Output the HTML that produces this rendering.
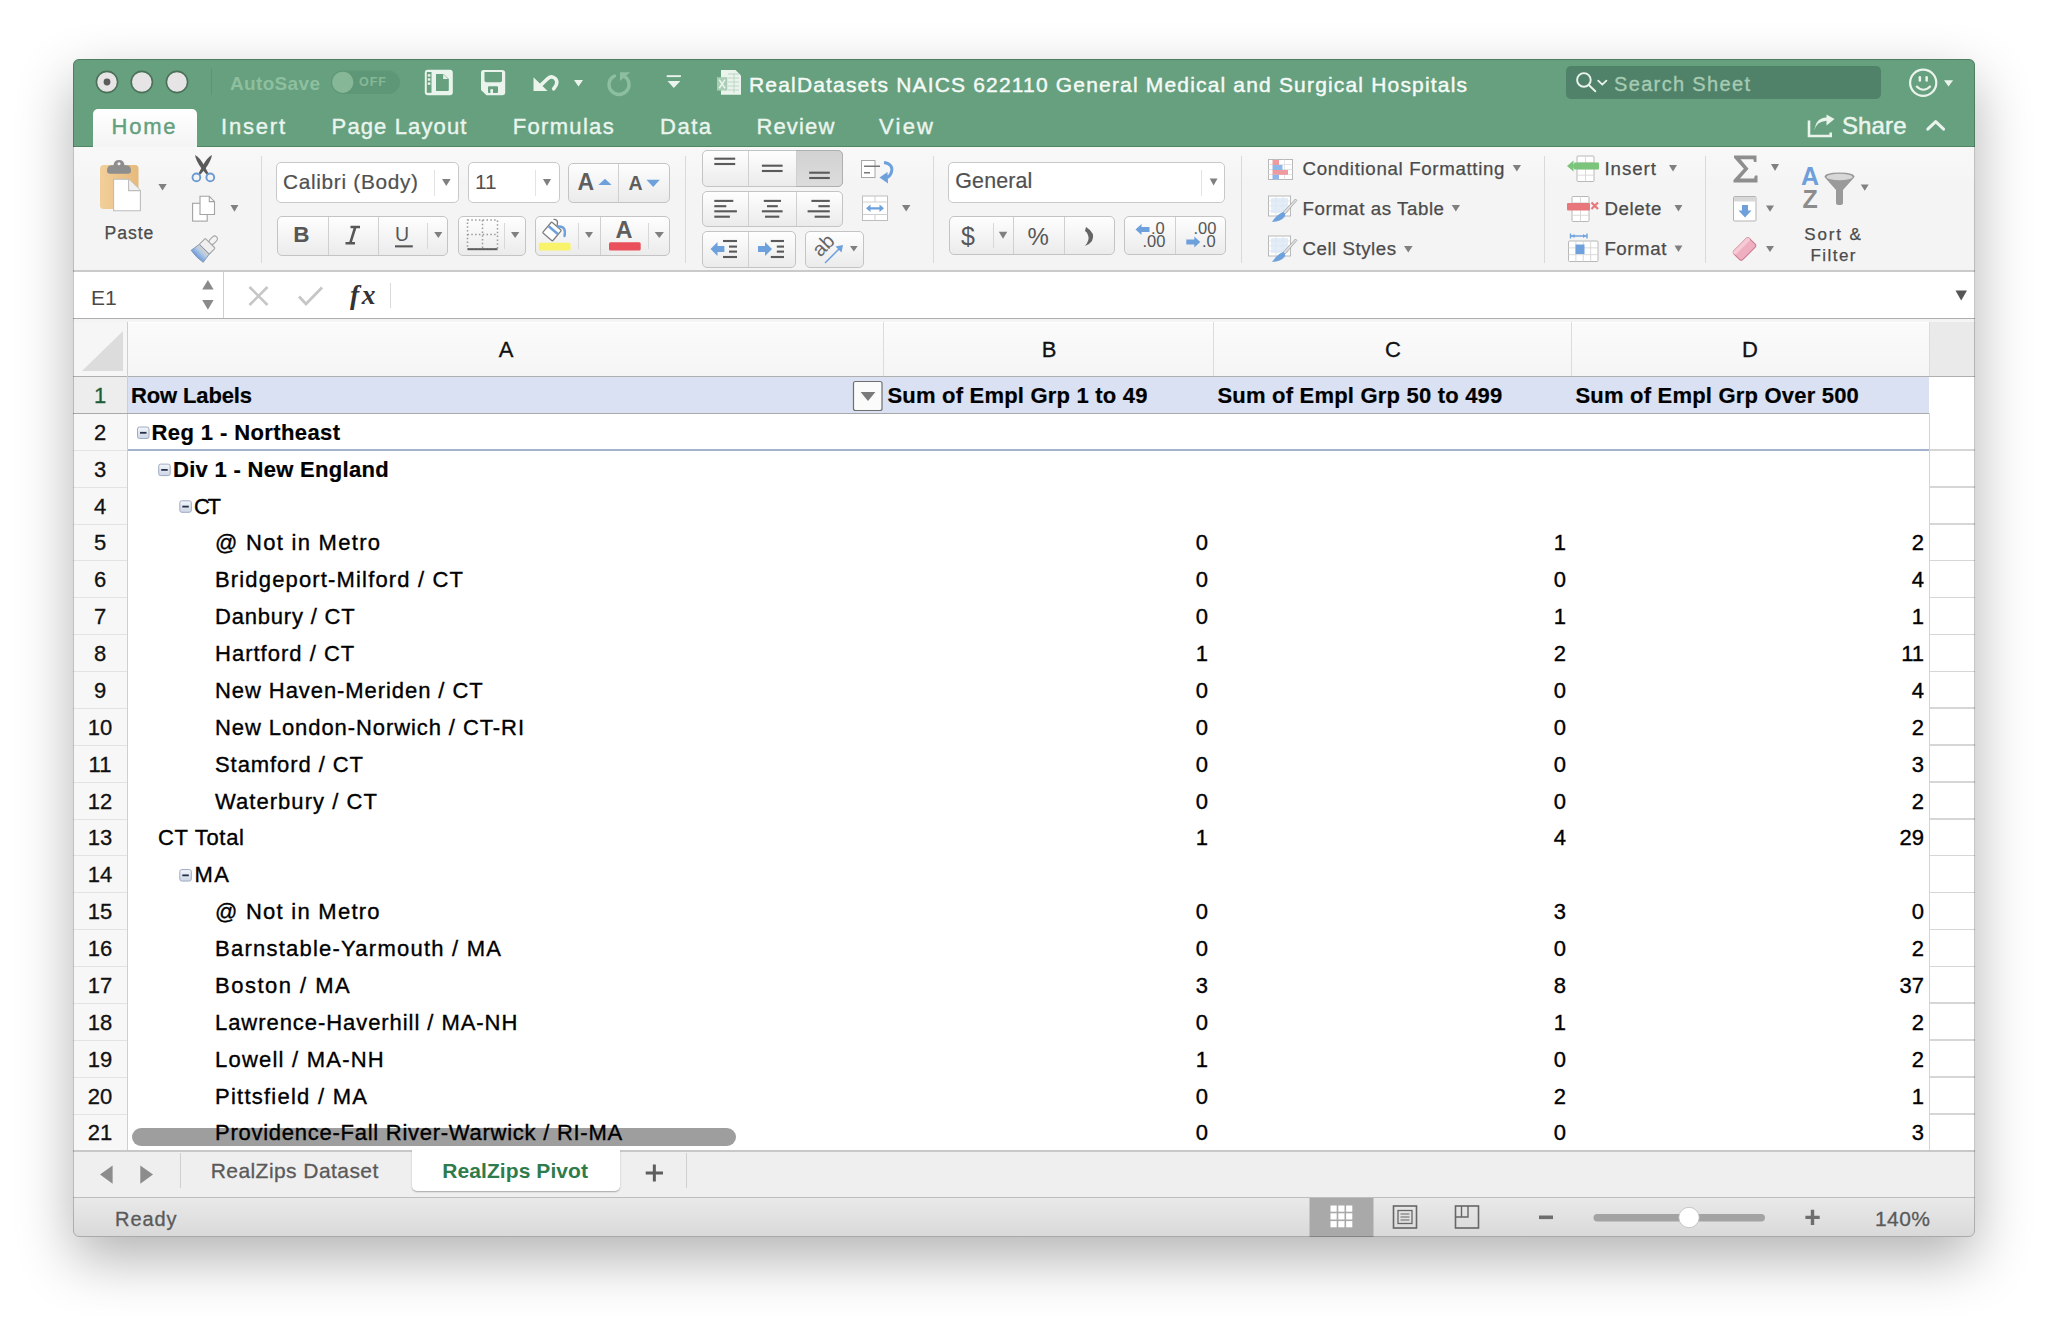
<!DOCTYPE html>
<html><head><meta charset="utf-8"><style>
html,body{margin:0;padding:0;background:#fff;width:2048px;height:1325px;overflow:hidden;font-family:"Liberation Sans", sans-serif;}
#root{position:relative;width:2048px;height:1325px;overflow:hidden;}
#root div, #root span, #root svg{position:absolute;box-sizing:border-box;}
</style></head><body><div id="root">
<div style="left:73px;top:59px;width:1902px;height:1178px;border-radius:6px;background:#fff;box-shadow:0 22px 56px rgba(0,0,0,0.30);"></div>
<div style="left:73px;top:59px;width:1902px;height:88px;background:#66A07E;border-radius:6px 6px 0 0;"></div>
<div style="left:73px;top:146px;width:1902px;height:1px;background:#4F8863;"></div>
<div style="left:73px;top:147px;width:1902px;height:123px;background:linear-gradient(#F8F8F8 0px,#F6F6F6 28px,#F4F4F4 34px,#F4F4F4 100%);"></div>
<div style="left:73px;top:270px;width:1902px;height:2px;background:#CACACA;"></div>
<div style="left:73px;top:272px;width:1902px;height:46px;background:#FFFFFF;"></div>
<div style="left:73px;top:318px;width:1902px;height:1px;background:#AEAEAE;"></div>
<div style="left:73px;top:319px;width:1902px;height:2.5px;background:#F4F4F4;"></div>
<div style="left:73px;top:321.5px;width:1902px;height:1.2px;background:#ACACAC;"></div>
<div style="left:73px;top:322px;width:1902px;height:829px;background:#FFFFFF;"></div>
<div style="left:73px;top:322.7px;width:1902px;height:53.3px;background:linear-gradient(#FBFBFB,#F5F5F5);"></div>
<div style="left:73px;top:375.7px;width:1902px;height:1.3px;background:#AFAFAF;"></div>
<div style="left:73px;top:322px;width:54px;height:54px;background:#F6F6F6;"></div>
<svg style="left:73px;top:322px;" width="54" height="54" viewBox="0 0 54 54"><polygon points="9,49 50,49 50,9" fill="#DCDCDC"/></svg>
<div style="left:127px;top:322px;width:1px;height:829px;background:#CFCFCF;"></div>
<div style="left:883px;top:322px;width:1px;height:54px;background:#DCDCDC;"></div>
<div style="left:1213px;top:322px;width:1px;height:54px;background:#DCDCDC;"></div>
<div style="left:1571px;top:322px;width:1px;height:54px;background:#DCDCDC;"></div>
<div style="left:1929px;top:322px;width:1px;height:54px;background:#DCDCDC;"></div>
<div style="left:1930px;top:322px;width:45px;height:54px;background:#EAEAEA;"></div>
<span style="left:498.66px;top:338.88px;font-size:22px;line-height:22px;color:#111;font-weight:normal;letter-spacing:0.000px;white-space:pre;-webkit-text-stroke:0.3px #111;">A</span>
<span style="left:1041.66px;top:338.88px;font-size:22px;line-height:22px;color:#111;font-weight:normal;letter-spacing:0.000px;white-space:pre;-webkit-text-stroke:0.3px #111;">B</span>
<span style="left:1385.05px;top:338.88px;font-size:22px;line-height:22px;color:#111;font-weight:normal;letter-spacing:0.000px;white-space:pre;-webkit-text-stroke:0.3px #111;">C</span>
<span style="left:1742.05px;top:338.88px;font-size:22px;line-height:22px;color:#111;font-weight:normal;letter-spacing:0.000px;white-space:pre;-webkit-text-stroke:0.3px #111;">D</span>
<div style="left:73px;top:377px;width:54px;height:774px;background:#F7F7F7;"></div>
<div style="left:73px;top:412.875px;width:54px;height:1px;background:#E3E3E3;"></div>
<div style="left:73px;top:449.75px;width:54px;height:1px;background:#E3E3E3;"></div>
<div style="left:73px;top:486.625px;width:54px;height:1px;background:#E3E3E3;"></div>
<div style="left:73px;top:523.5px;width:54px;height:1px;background:#E3E3E3;"></div>
<div style="left:73px;top:560.375px;width:54px;height:1px;background:#E3E3E3;"></div>
<div style="left:73px;top:597.25px;width:54px;height:1px;background:#E3E3E3;"></div>
<div style="left:73px;top:634.125px;width:54px;height:1px;background:#E3E3E3;"></div>
<div style="left:73px;top:671.0px;width:54px;height:1px;background:#E3E3E3;"></div>
<div style="left:73px;top:707.875px;width:54px;height:1px;background:#E3E3E3;"></div>
<div style="left:73px;top:744.75px;width:54px;height:1px;background:#E3E3E3;"></div>
<div style="left:73px;top:781.625px;width:54px;height:1px;background:#E3E3E3;"></div>
<div style="left:73px;top:818.5px;width:54px;height:1px;background:#E3E3E3;"></div>
<div style="left:73px;top:855.375px;width:54px;height:1px;background:#E3E3E3;"></div>
<div style="left:73px;top:892.25px;width:54px;height:1px;background:#E3E3E3;"></div>
<div style="left:73px;top:929.125px;width:54px;height:1px;background:#E3E3E3;"></div>
<div style="left:73px;top:966.0px;width:54px;height:1px;background:#E3E3E3;"></div>
<div style="left:73px;top:1002.875px;width:54px;height:1px;background:#E3E3E3;"></div>
<div style="left:73px;top:1039.75px;width:54px;height:1px;background:#E3E3E3;"></div>
<div style="left:73px;top:1076.625px;width:54px;height:1px;background:#E3E3E3;"></div>
<div style="left:73px;top:1113.5px;width:54px;height:1px;background:#E3E3E3;"></div>
<div style="left:73px;top:377px;width:54px;height:36px;background:#EDEDED;"></div>
<div style="left:128px;top:377px;width:1801px;height:36px;background:#D9E1F2;"></div>
<div style="left:73px;top:412.5px;width:1856px;height:1.5px;background:#A9A9A9;"></div>
<div style="left:128px;top:449px;width:1801px;height:2px;background:#A3B2CD;"></div>
<div style="left:1929px;top:413px;width:1px;height:738px;background:#D4D4D4;"></div>
<div style="left:1930px;top:449.25px;width:45px;height:1.5px;background:#D6D6D6;"></div>
<div style="left:1930px;top:486.125px;width:45px;height:1.5px;background:#D6D6D6;"></div>
<div style="left:1930px;top:523.0px;width:45px;height:1.5px;background:#D6D6D6;"></div>
<div style="left:1930px;top:559.875px;width:45px;height:1.5px;background:#D6D6D6;"></div>
<div style="left:1930px;top:596.75px;width:45px;height:1.5px;background:#D6D6D6;"></div>
<div style="left:1930px;top:633.625px;width:45px;height:1.5px;background:#D6D6D6;"></div>
<div style="left:1930px;top:670.5px;width:45px;height:1.5px;background:#D6D6D6;"></div>
<div style="left:1930px;top:707.375px;width:45px;height:1.5px;background:#D6D6D6;"></div>
<div style="left:1930px;top:744.25px;width:45px;height:1.5px;background:#D6D6D6;"></div>
<div style="left:1930px;top:781.125px;width:45px;height:1.5px;background:#D6D6D6;"></div>
<div style="left:1930px;top:818.0px;width:45px;height:1.5px;background:#D6D6D6;"></div>
<div style="left:1930px;top:854.875px;width:45px;height:1.5px;background:#D6D6D6;"></div>
<div style="left:1930px;top:891.75px;width:45px;height:1.5px;background:#D6D6D6;"></div>
<div style="left:1930px;top:928.625px;width:45px;height:1.5px;background:#D6D6D6;"></div>
<div style="left:1930px;top:965.5px;width:45px;height:1.5px;background:#D6D6D6;"></div>
<div style="left:1930px;top:1002.375px;width:45px;height:1.5px;background:#D6D6D6;"></div>
<div style="left:1930px;top:1039.25px;width:45px;height:1.5px;background:#D6D6D6;"></div>
<div style="left:1930px;top:1076.125px;width:45px;height:1.5px;background:#D6D6D6;"></div>
<div style="left:1930px;top:1113.0px;width:45px;height:1.5px;background:#D6D6D6;"></div>
<div style="left:1930px;top:1149.875px;width:45px;height:1.5px;background:#D6D6D6;"></div>
<span style="left:93.88px;top:384.88px;font-size:22px;line-height:22px;color:#1F5C3C;font-weight:normal;letter-spacing:0.000px;white-space:pre;-webkit-text-stroke:0.3px currentColor;">1</span>
<span style="left:93.88px;top:421.75px;font-size:22px;line-height:22px;color:#111;font-weight:normal;letter-spacing:0.000px;white-space:pre;-webkit-text-stroke:0.3px currentColor;">2</span>
<span style="left:93.88px;top:458.63px;font-size:22px;line-height:22px;color:#111;font-weight:normal;letter-spacing:0.000px;white-space:pre;-webkit-text-stroke:0.3px currentColor;">3</span>
<span style="left:93.88px;top:495.50px;font-size:22px;line-height:22px;color:#111;font-weight:normal;letter-spacing:0.000px;white-space:pre;-webkit-text-stroke:0.3px currentColor;">4</span>
<span style="left:93.88px;top:532.38px;font-size:22px;line-height:22px;color:#111;font-weight:normal;letter-spacing:0.000px;white-space:pre;-webkit-text-stroke:0.3px currentColor;">5</span>
<span style="left:93.88px;top:569.25px;font-size:22px;line-height:22px;color:#111;font-weight:normal;letter-spacing:0.000px;white-space:pre;-webkit-text-stroke:0.3px currentColor;">6</span>
<span style="left:93.88px;top:606.13px;font-size:22px;line-height:22px;color:#111;font-weight:normal;letter-spacing:0.000px;white-space:pre;-webkit-text-stroke:0.3px currentColor;">7</span>
<span style="left:93.88px;top:643.00px;font-size:22px;line-height:22px;color:#111;font-weight:normal;letter-spacing:0.000px;white-space:pre;-webkit-text-stroke:0.3px currentColor;">8</span>
<span style="left:93.88px;top:679.88px;font-size:22px;line-height:22px;color:#111;font-weight:normal;letter-spacing:0.000px;white-space:pre;-webkit-text-stroke:0.3px currentColor;">9</span>
<span style="left:87.76px;top:716.75px;font-size:22px;line-height:22px;color:#111;font-weight:normal;letter-spacing:0.000px;white-space:pre;-webkit-text-stroke:0.3px currentColor;">10</span>
<span style="left:88.58px;top:753.63px;font-size:22px;line-height:22px;color:#111;font-weight:normal;letter-spacing:0.000px;white-space:pre;-webkit-text-stroke:0.3px currentColor;">11</span>
<span style="left:87.76px;top:790.50px;font-size:22px;line-height:22px;color:#111;font-weight:normal;letter-spacing:0.000px;white-space:pre;-webkit-text-stroke:0.3px currentColor;">12</span>
<span style="left:87.76px;top:827.38px;font-size:22px;line-height:22px;color:#111;font-weight:normal;letter-spacing:0.000px;white-space:pre;-webkit-text-stroke:0.3px currentColor;">13</span>
<span style="left:87.76px;top:864.25px;font-size:22px;line-height:22px;color:#111;font-weight:normal;letter-spacing:0.000px;white-space:pre;-webkit-text-stroke:0.3px currentColor;">14</span>
<span style="left:87.76px;top:901.13px;font-size:22px;line-height:22px;color:#111;font-weight:normal;letter-spacing:0.000px;white-space:pre;-webkit-text-stroke:0.3px currentColor;">15</span>
<span style="left:87.76px;top:938.00px;font-size:22px;line-height:22px;color:#111;font-weight:normal;letter-spacing:0.000px;white-space:pre;-webkit-text-stroke:0.3px currentColor;">16</span>
<span style="left:87.76px;top:974.88px;font-size:22px;line-height:22px;color:#111;font-weight:normal;letter-spacing:0.000px;white-space:pre;-webkit-text-stroke:0.3px currentColor;">17</span>
<span style="left:87.76px;top:1011.75px;font-size:22px;line-height:22px;color:#111;font-weight:normal;letter-spacing:0.000px;white-space:pre;-webkit-text-stroke:0.3px currentColor;">18</span>
<span style="left:87.76px;top:1048.63px;font-size:22px;line-height:22px;color:#111;font-weight:normal;letter-spacing:0.000px;white-space:pre;-webkit-text-stroke:0.3px currentColor;">19</span>
<span style="left:87.76px;top:1085.50px;font-size:22px;line-height:22px;color:#111;font-weight:normal;letter-spacing:0.000px;white-space:pre;-webkit-text-stroke:0.3px currentColor;">20</span>
<span style="left:87.76px;top:1122.38px;font-size:22px;line-height:22px;color:#111;font-weight:normal;letter-spacing:0.000px;white-space:pre;-webkit-text-stroke:0.3px currentColor;">21</span>
<span style="left:131.00px;top:384.88px;font-size:22px;line-height:22px;color:#000;font-weight:bold;letter-spacing:-0.139px;white-space:pre;-webkit-text-stroke:0.2px #000;">Row Labels</span>
<span style="left:151.50px;top:421.75px;font-size:22px;line-height:22px;color:#000;font-weight:bold;letter-spacing:0.396px;white-space:pre;-webkit-text-stroke:0.2px #000;">Reg 1 - Northeast</span>
<span style="left:173.00px;top:458.63px;font-size:22px;line-height:22px;color:#000;font-weight:bold;letter-spacing:0.302px;white-space:pre;-webkit-text-stroke:0.2px #000;">Div 1 - New England</span>
<span style="left:194.00px;top:495.50px;font-size:22px;line-height:22px;color:#000;font-weight:normal;letter-spacing:-2.328px;white-space:pre;-webkit-text-stroke:0.35px #000;">CT</span>
<span style="left:215.00px;top:532.38px;font-size:22px;line-height:22px;color:#000;font-weight:normal;letter-spacing:1.287px;white-space:pre;-webkit-text-stroke:0.35px #000;">@ Not in Metro</span>
<span style="left:1195.75px;top:532.38px;font-size:22px;line-height:22px;color:#000;font-weight:normal;letter-spacing:0.000px;white-space:pre;-webkit-text-stroke:0.35px #000;">0</span>
<span style="left:1553.75px;top:532.38px;font-size:22px;line-height:22px;color:#000;font-weight:normal;letter-spacing:0.000px;white-space:pre;-webkit-text-stroke:0.35px #000;">1</span>
<span style="left:1911.75px;top:532.38px;font-size:22px;line-height:22px;color:#000;font-weight:normal;letter-spacing:0.000px;white-space:pre;-webkit-text-stroke:0.35px #000;">2</span>
<span style="left:215.00px;top:569.25px;font-size:22px;line-height:22px;color:#000;font-weight:normal;letter-spacing:1.158px;white-space:pre;-webkit-text-stroke:0.35px #000;">Bridgeport-Milford / CT</span>
<span style="left:1195.75px;top:569.25px;font-size:22px;line-height:22px;color:#000;font-weight:normal;letter-spacing:0.000px;white-space:pre;-webkit-text-stroke:0.35px #000;">0</span>
<span style="left:1553.75px;top:569.25px;font-size:22px;line-height:22px;color:#000;font-weight:normal;letter-spacing:0.000px;white-space:pre;-webkit-text-stroke:0.35px #000;">0</span>
<span style="left:1911.75px;top:569.25px;font-size:22px;line-height:22px;color:#000;font-weight:normal;letter-spacing:0.000px;white-space:pre;-webkit-text-stroke:0.35px #000;">4</span>
<span style="left:215.00px;top:606.13px;font-size:22px;line-height:22px;color:#000;font-weight:normal;letter-spacing:0.807px;white-space:pre;-webkit-text-stroke:0.35px #000;">Danbury / CT</span>
<span style="left:1195.75px;top:606.13px;font-size:22px;line-height:22px;color:#000;font-weight:normal;letter-spacing:0.000px;white-space:pre;-webkit-text-stroke:0.35px #000;">0</span>
<span style="left:1553.75px;top:606.13px;font-size:22px;line-height:22px;color:#000;font-weight:normal;letter-spacing:0.000px;white-space:pre;-webkit-text-stroke:0.35px #000;">1</span>
<span style="left:1911.75px;top:606.13px;font-size:22px;line-height:22px;color:#000;font-weight:normal;letter-spacing:0.000px;white-space:pre;-webkit-text-stroke:0.35px #000;">1</span>
<span style="left:215.00px;top:643.00px;font-size:22px;line-height:22px;color:#000;font-weight:normal;letter-spacing:1.013px;white-space:pre;-webkit-text-stroke:0.35px #000;">Hartford / CT</span>
<span style="left:1195.75px;top:643.00px;font-size:22px;line-height:22px;color:#000;font-weight:normal;letter-spacing:0.000px;white-space:pre;-webkit-text-stroke:0.35px #000;">1</span>
<span style="left:1553.75px;top:643.00px;font-size:22px;line-height:22px;color:#000;font-weight:normal;letter-spacing:0.000px;white-space:pre;-webkit-text-stroke:0.35px #000;">2</span>
<span style="left:1901.16px;top:643.00px;font-size:22px;line-height:22px;color:#000;font-weight:normal;letter-spacing:0.000px;white-space:pre;-webkit-text-stroke:0.35px #000;">11</span>
<span style="left:215.00px;top:679.88px;font-size:22px;line-height:22px;color:#000;font-weight:normal;letter-spacing:0.929px;white-space:pre;-webkit-text-stroke:0.35px #000;">New Haven-Meriden / CT</span>
<span style="left:1195.75px;top:679.88px;font-size:22px;line-height:22px;color:#000;font-weight:normal;letter-spacing:0.000px;white-space:pre;-webkit-text-stroke:0.35px #000;">0</span>
<span style="left:1553.75px;top:679.88px;font-size:22px;line-height:22px;color:#000;font-weight:normal;letter-spacing:0.000px;white-space:pre;-webkit-text-stroke:0.35px #000;">0</span>
<span style="left:1911.75px;top:679.88px;font-size:22px;line-height:22px;color:#000;font-weight:normal;letter-spacing:0.000px;white-space:pre;-webkit-text-stroke:0.35px #000;">4</span>
<span style="left:215.00px;top:716.75px;font-size:22px;line-height:22px;color:#000;font-weight:normal;letter-spacing:0.916px;white-space:pre;-webkit-text-stroke:0.35px #000;">New London-Norwich / CT-RI</span>
<span style="left:1195.75px;top:716.75px;font-size:22px;line-height:22px;color:#000;font-weight:normal;letter-spacing:0.000px;white-space:pre;-webkit-text-stroke:0.35px #000;">0</span>
<span style="left:1553.75px;top:716.75px;font-size:22px;line-height:22px;color:#000;font-weight:normal;letter-spacing:0.000px;white-space:pre;-webkit-text-stroke:0.35px #000;">0</span>
<span style="left:1911.75px;top:716.75px;font-size:22px;line-height:22px;color:#000;font-weight:normal;letter-spacing:0.000px;white-space:pre;-webkit-text-stroke:0.35px #000;">2</span>
<span style="left:215.00px;top:753.63px;font-size:22px;line-height:22px;color:#000;font-weight:normal;letter-spacing:0.923px;white-space:pre;-webkit-text-stroke:0.35px #000;">Stamford / CT</span>
<span style="left:1195.75px;top:753.63px;font-size:22px;line-height:22px;color:#000;font-weight:normal;letter-spacing:0.000px;white-space:pre;-webkit-text-stroke:0.35px #000;">0</span>
<span style="left:1553.75px;top:753.63px;font-size:22px;line-height:22px;color:#000;font-weight:normal;letter-spacing:0.000px;white-space:pre;-webkit-text-stroke:0.35px #000;">0</span>
<span style="left:1911.75px;top:753.63px;font-size:22px;line-height:22px;color:#000;font-weight:normal;letter-spacing:0.000px;white-space:pre;-webkit-text-stroke:0.35px #000;">3</span>
<span style="left:215.00px;top:790.50px;font-size:22px;line-height:22px;color:#000;font-weight:normal;letter-spacing:1.044px;white-space:pre;-webkit-text-stroke:0.35px #000;">Waterbury / CT</span>
<span style="left:1195.75px;top:790.50px;font-size:22px;line-height:22px;color:#000;font-weight:normal;letter-spacing:0.000px;white-space:pre;-webkit-text-stroke:0.35px #000;">0</span>
<span style="left:1553.75px;top:790.50px;font-size:22px;line-height:22px;color:#000;font-weight:normal;letter-spacing:0.000px;white-space:pre;-webkit-text-stroke:0.35px #000;">0</span>
<span style="left:1911.75px;top:790.50px;font-size:22px;line-height:22px;color:#000;font-weight:normal;letter-spacing:0.000px;white-space:pre;-webkit-text-stroke:0.35px #000;">2</span>
<span style="left:158.00px;top:827.38px;font-size:22px;line-height:22px;color:#000;font-weight:normal;letter-spacing:0.696px;white-space:pre;-webkit-text-stroke:0.35px #000;">CT Total</span>
<span style="left:1195.75px;top:827.38px;font-size:22px;line-height:22px;color:#000;font-weight:normal;letter-spacing:0.000px;white-space:pre;-webkit-text-stroke:0.35px #000;">1</span>
<span style="left:1553.75px;top:827.38px;font-size:22px;line-height:22px;color:#000;font-weight:normal;letter-spacing:0.000px;white-space:pre;-webkit-text-stroke:0.35px #000;">4</span>
<span style="left:1899.52px;top:827.38px;font-size:22px;line-height:22px;color:#000;font-weight:normal;letter-spacing:0.000px;white-space:pre;-webkit-text-stroke:0.35px #000;">29</span>
<span style="left:194.50px;top:864.25px;font-size:22px;line-height:22px;color:#000;font-weight:normal;letter-spacing:1.500px;white-space:pre;-webkit-text-stroke:0.35px #000;">MA</span>
<span style="left:215.00px;top:901.13px;font-size:22px;line-height:22px;color:#000;font-weight:normal;letter-spacing:1.256px;white-space:pre;-webkit-text-stroke:0.35px #000;">@ Not in Metro</span>
<span style="left:1195.75px;top:901.13px;font-size:22px;line-height:22px;color:#000;font-weight:normal;letter-spacing:0.000px;white-space:pre;-webkit-text-stroke:0.35px #000;">0</span>
<span style="left:1553.75px;top:901.13px;font-size:22px;line-height:22px;color:#000;font-weight:normal;letter-spacing:0.000px;white-space:pre;-webkit-text-stroke:0.35px #000;">3</span>
<span style="left:1911.75px;top:901.13px;font-size:22px;line-height:22px;color:#000;font-weight:normal;letter-spacing:0.000px;white-space:pre;-webkit-text-stroke:0.35px #000;">0</span>
<span style="left:215.00px;top:938.00px;font-size:22px;line-height:22px;color:#000;font-weight:normal;letter-spacing:1.235px;white-space:pre;-webkit-text-stroke:0.35px #000;">Barnstable-Yarmouth / MA</span>
<span style="left:1195.75px;top:938.00px;font-size:22px;line-height:22px;color:#000;font-weight:normal;letter-spacing:0.000px;white-space:pre;-webkit-text-stroke:0.35px #000;">0</span>
<span style="left:1553.75px;top:938.00px;font-size:22px;line-height:22px;color:#000;font-weight:normal;letter-spacing:0.000px;white-space:pre;-webkit-text-stroke:0.35px #000;">0</span>
<span style="left:1911.75px;top:938.00px;font-size:22px;line-height:22px;color:#000;font-weight:normal;letter-spacing:0.000px;white-space:pre;-webkit-text-stroke:0.35px #000;">2</span>
<span style="left:215.00px;top:974.88px;font-size:22px;line-height:22px;color:#000;font-weight:normal;letter-spacing:1.496px;white-space:pre;-webkit-text-stroke:0.35px #000;">Boston / MA</span>
<span style="left:1195.75px;top:974.88px;font-size:22px;line-height:22px;color:#000;font-weight:normal;letter-spacing:0.000px;white-space:pre;-webkit-text-stroke:0.35px #000;">3</span>
<span style="left:1553.75px;top:974.88px;font-size:22px;line-height:22px;color:#000;font-weight:normal;letter-spacing:0.000px;white-space:pre;-webkit-text-stroke:0.35px #000;">8</span>
<span style="left:1899.52px;top:974.88px;font-size:22px;line-height:22px;color:#000;font-weight:normal;letter-spacing:0.000px;white-space:pre;-webkit-text-stroke:0.35px #000;">37</span>
<span style="left:215.00px;top:1011.75px;font-size:22px;line-height:22px;color:#000;font-weight:normal;letter-spacing:0.942px;white-space:pre;-webkit-text-stroke:0.35px #000;">Lawrence-Haverhill / MA-NH</span>
<span style="left:1195.75px;top:1011.75px;font-size:22px;line-height:22px;color:#000;font-weight:normal;letter-spacing:0.000px;white-space:pre;-webkit-text-stroke:0.35px #000;">0</span>
<span style="left:1553.75px;top:1011.75px;font-size:22px;line-height:22px;color:#000;font-weight:normal;letter-spacing:0.000px;white-space:pre;-webkit-text-stroke:0.35px #000;">1</span>
<span style="left:1911.75px;top:1011.75px;font-size:22px;line-height:22px;color:#000;font-weight:normal;letter-spacing:0.000px;white-space:pre;-webkit-text-stroke:0.35px #000;">2</span>
<span style="left:215.00px;top:1048.63px;font-size:22px;line-height:22px;color:#000;font-weight:normal;letter-spacing:1.222px;white-space:pre;-webkit-text-stroke:0.35px #000;">Lowell / MA-NH</span>
<span style="left:1195.75px;top:1048.63px;font-size:22px;line-height:22px;color:#000;font-weight:normal;letter-spacing:0.000px;white-space:pre;-webkit-text-stroke:0.35px #000;">1</span>
<span style="left:1553.75px;top:1048.63px;font-size:22px;line-height:22px;color:#000;font-weight:normal;letter-spacing:0.000px;white-space:pre;-webkit-text-stroke:0.35px #000;">0</span>
<span style="left:1911.75px;top:1048.63px;font-size:22px;line-height:22px;color:#000;font-weight:normal;letter-spacing:0.000px;white-space:pre;-webkit-text-stroke:0.35px #000;">2</span>
<span style="left:215.00px;top:1085.50px;font-size:22px;line-height:22px;color:#000;font-weight:normal;letter-spacing:1.244px;white-space:pre;-webkit-text-stroke:0.35px #000;">Pittsfield / MA</span>
<span style="left:1195.75px;top:1085.50px;font-size:22px;line-height:22px;color:#000;font-weight:normal;letter-spacing:0.000px;white-space:pre;-webkit-text-stroke:0.35px #000;">0</span>
<span style="left:1553.75px;top:1085.50px;font-size:22px;line-height:22px;color:#000;font-weight:normal;letter-spacing:0.000px;white-space:pre;-webkit-text-stroke:0.35px #000;">2</span>
<span style="left:1911.75px;top:1085.50px;font-size:22px;line-height:22px;color:#000;font-weight:normal;letter-spacing:0.000px;white-space:pre;-webkit-text-stroke:0.35px #000;">1</span>
<span style="left:215.00px;top:1122.38px;font-size:22px;line-height:22px;color:#000;font-weight:normal;letter-spacing:0.739px;white-space:pre;-webkit-text-stroke:0.35px #000;">Providence-Fall River-Warwick / RI-MA</span>
<span style="left:1195.75px;top:1122.38px;font-size:22px;line-height:22px;color:#000;font-weight:normal;letter-spacing:0.000px;white-space:pre;-webkit-text-stroke:0.35px #000;">0</span>
<span style="left:1553.75px;top:1122.38px;font-size:22px;line-height:22px;color:#000;font-weight:normal;letter-spacing:0.000px;white-space:pre;-webkit-text-stroke:0.35px #000;">0</span>
<span style="left:1911.75px;top:1122.38px;font-size:22px;line-height:22px;color:#000;font-weight:normal;letter-spacing:0.000px;white-space:pre;-webkit-text-stroke:0.35px #000;">3</span>
<span style="left:887.50px;top:384.88px;font-size:22px;line-height:22px;color:#000;font-weight:bold;letter-spacing:0.200px;white-space:pre;-webkit-text-stroke:0.2px #000;">Sum of Empl Grp 1 to 49</span>
<span style="left:1217.50px;top:384.88px;font-size:22px;line-height:22px;color:#000;font-weight:bold;letter-spacing:0.200px;white-space:pre;-webkit-text-stroke:0.2px #000;">Sum of Empl Grp 50 to 499</span>
<span style="left:1575.50px;top:384.88px;font-size:22px;line-height:22px;color:#000;font-weight:bold;letter-spacing:0.200px;white-space:pre;-webkit-text-stroke:0.2px #000;">Sum of Empl Grp Over 500</span>
<div style="left:73px;top:1151px;width:1902px;height:47px;background:#EFEFEF;"></div>
<div style="left:73px;top:1150px;width:1902px;height:2px;background:#C8C8C8;"></div>
<div style="left:73px;top:1197px;width:1902px;height:1px;background:#BDBDBD;"></div>
<div style="left:73px;top:1198px;width:1902px;height:39px;background:linear-gradient(#E9E9E9,#D9D9D9);border-radius:0 0 6px 6px;"></div>
<span style="left:210.70px;top:1159.72px;font-size:21px;line-height:21px;color:#5A5A5A;font-weight:normal;letter-spacing:0.435px;white-space:pre;-webkit-text-stroke:0.3px #5A5A5A;">RealZips Dataset</span>
<div style="left:412px;top:1150px;width:208px;height:41px;background:#fff;border-radius:0 0 5px 5px;box-shadow:0 1px 1.5px rgba(0,0,0,0.3);"></div>
<span style="left:442.30px;top:1159.72px;font-size:21px;line-height:21px;color:#2E7B4C;font-weight:bold;letter-spacing:0.077px;white-space:pre;">RealZips Pivot</span>
<span style="left:115.00px;top:1208.67px;font-size:20px;line-height:20px;color:#5A5A5A;font-weight:normal;letter-spacing:0.947px;white-space:pre;-webkit-text-stroke:0.3px #5A5A5A;">Ready</span>
<span style="left:1875.00px;top:1208.12px;font-size:21px;line-height:21px;color:#5A5A5A;font-weight:normal;letter-spacing:0.427px;white-space:pre;-webkit-text-stroke:0.3px #5A5A5A;">140%</span>
<span style="left:749.00px;top:73.52px;font-size:21px;line-height:21px;color:#F4FAF6;font-weight:normal;letter-spacing:1.175px;white-space:pre;-webkit-text-stroke:0.45px #F4FAF6;">RealDatasets NAICS 622110 General Medical and Surgical Hospitals</span>
<span style="left:230.00px;top:73.52px;font-size:19px;line-height:19px;color:#8EBF9F;font-weight:bold;letter-spacing:0.337px;white-space:pre;">AutoSave</span>
<div style="left:92.5px;top:109px;width:104.5px;height:38px;background:linear-gradient(#FFFFFF,#F4F4F4);border-radius:5px 5px 0 0;"></div>
<span style="left:111.50px;top:116.08px;font-size:22px;line-height:22px;color:#64A07E;font-weight:normal;letter-spacing:1.771px;white-space:pre;-webkit-text-stroke:0.4px #64A07E;">Home</span>
<span style="left:221.00px;top:116.08px;font-size:22px;line-height:22px;color:#EAF5EE;font-weight:normal;letter-spacing:1.794px;white-space:pre;-webkit-text-stroke:0.4px #EAF5EE;">Insert</span>
<span style="left:331.60px;top:116.08px;font-size:22px;line-height:22px;color:#EAF5EE;font-weight:normal;letter-spacing:1.125px;white-space:pre;-webkit-text-stroke:0.4px #EAF5EE;">Page Layout</span>
<span style="left:512.70px;top:116.08px;font-size:22px;line-height:22px;color:#EAF5EE;font-weight:normal;letter-spacing:1.330px;white-space:pre;-webkit-text-stroke:0.4px #EAF5EE;">Formulas</span>
<span style="left:660.00px;top:116.08px;font-size:22px;line-height:22px;color:#EAF5EE;font-weight:normal;letter-spacing:1.505px;white-space:pre;-webkit-text-stroke:0.4px #EAF5EE;">Data</span>
<span style="left:756.40px;top:116.08px;font-size:22px;line-height:22px;color:#EAF5EE;font-weight:normal;letter-spacing:1.172px;white-space:pre;-webkit-text-stroke:0.4px #EAF5EE;">Review</span>
<span style="left:879.00px;top:116.08px;font-size:22px;line-height:22px;color:#EAF5EE;font-weight:normal;letter-spacing:2.234px;white-space:pre;-webkit-text-stroke:0.4px #EAF5EE;">View</span>
<span style="left:1842.00px;top:114.38px;font-size:24px;line-height:24px;color:#EAF5EE;font-weight:normal;letter-spacing:0.113px;white-space:pre;-webkit-text-stroke:0.5px #EAF5EE;">Share</span>
<div style="left:1566px;top:66px;width:315px;height:33px;background:#50826A;border-radius:5px;"></div>
<span style="left:1614.00px;top:73.87px;font-size:20px;line-height:20px;color:#A6CBB3;font-weight:normal;letter-spacing:1.345px;white-space:pre;-webkit-text-stroke:0.35px #A6CBB3;">Search Sheet</span>
<span style="left:104.40px;top:225.30px;font-size:17.6px;line-height:17.6px;color:#4B4B4B;font-weight:normal;letter-spacing:1.000px;white-space:pre;-webkit-text-stroke:0.25px #4B4B4B;">Paste</span>
<span style="left:1302.50px;top:159.67px;font-size:18.7px;line-height:18.7px;color:#4B4B4B;font-weight:normal;letter-spacing:0.666px;white-space:pre;-webkit-text-stroke:0.25px #4B4B4B;">Conditional Formatting</span>
<span style="left:1302.50px;top:199.77px;font-size:18.7px;line-height:18.7px;color:#4B4B4B;font-weight:normal;letter-spacing:0.561px;white-space:pre;-webkit-text-stroke:0.25px #4B4B4B;">Format as Table</span>
<span style="left:1302.50px;top:240.17px;font-size:18.7px;line-height:18.7px;color:#4B4B4B;font-weight:normal;letter-spacing:0.522px;white-space:pre;-webkit-text-stroke:0.25px #4B4B4B;">Cell Styles</span>
<span style="left:1604.40px;top:159.97px;font-size:18.7px;line-height:18.7px;color:#4B4B4B;font-weight:normal;letter-spacing:0.970px;white-space:pre;-webkit-text-stroke:0.25px #4B4B4B;">Insert</span>
<span style="left:1604.40px;top:199.87px;font-size:18.7px;line-height:18.7px;color:#4B4B4B;font-weight:normal;letter-spacing:0.594px;white-space:pre;-webkit-text-stroke:0.25px #4B4B4B;">Delete</span>
<span style="left:1604.40px;top:240.17px;font-size:18.7px;line-height:18.7px;color:#4B4B4B;font-weight:normal;letter-spacing:0.562px;white-space:pre;-webkit-text-stroke:0.25px #4B4B4B;">Format</span>
<span style="left:1804.30px;top:225.61px;font-size:17px;line-height:17px;color:#4B4B4B;font-weight:normal;letter-spacing:1.850px;white-space:pre;-webkit-text-stroke:0.25px #4B4B4B;">Sort &amp;</span>
<span style="left:1810.50px;top:246.61px;font-size:17px;line-height:17px;color:#4B4B4B;font-weight:normal;letter-spacing:1.444px;white-space:pre;-webkit-text-stroke:0.25px #4B4B4B;">Filter</span>
<div style="left:276px;top:162px;width:183px;height:41px;background:#fff;border:1px solid #C9C9C9;border-radius:5px;"></div>
<div style="left:467.5px;top:162px;width:92px;height:41px;background:#fff;border:1px solid #C9C9C9;border-radius:5px;"></div>
<div style="left:434px;top:170px;width:1px;height:26px;background:#E3E3E3;"></div>
<div style="left:534.5px;top:170px;width:1px;height:26px;background:#E3E3E3;"></div>
<span style="left:283.00px;top:171.79px;font-size:20.8px;line-height:20.8px;color:#505050;font-weight:normal;letter-spacing:0.694px;white-space:pre;-webkit-text-stroke:0.2px #505050;">Calibri (Body)</span>
<span style="left:475.00px;top:171.79px;font-size:20.8px;line-height:20.8px;color:#505050;font-weight:normal;letter-spacing:0.000px;white-space:pre;">11</span>
<div style="left:948px;top:162px;width:277px;height:41px;background:#fff;border:1px solid #C9C9C9;border-radius:5px;"></div>
<div style="left:1201px;top:170px;width:1px;height:26px;background:#E3E3E3;"></div>
<span style="left:955.30px;top:171.38px;font-size:21.4px;line-height:21.4px;color:#505050;font-weight:normal;letter-spacing:0.148px;white-space:pre;-webkit-text-stroke:0.2px #505050;">General</span>
<span style="left:91.00px;top:287.22px;font-size:21px;line-height:21px;color:#4A4A4A;font-weight:normal;letter-spacing:0.000px;white-space:pre;">E1</span>
<div style="left:223px;top:272px;width:1px;height:46px;background:#D0D0D0;"></div>
<svg style="left:80px;top:59px;" width="120" height="46" viewBox="0 0 120 46"><circle cx="27" cy="23" r="10.6" fill="#E6E4E4" stroke="#4B7058" stroke-width="1.6"/><circle cx="61.80000000000001" cy="23" r="10.6" fill="#E6E4E4" stroke="#4B7058" stroke-width="1.6"/><circle cx="97" cy="23" r="10.6" fill="#E6E4E4" stroke="#4B7058" stroke-width="1.6"/><circle cx="27" cy="23" r="3.4" fill="#5C5C5C"/></svg>
<div style="left:210.5px;top:68px;width:1px;height:27px;background:#5C9474;"></div>
<svg style="left:330px;top:70px;" width="72" height="25" viewBox="0 0 72 25"><rect x="1" y="0.5" width="69" height="23.5" rx="11.75" fill="#5E9777"/><circle cx="12.8" cy="12.3" r="10.6" fill="#86B897"/></svg>
<span style="left:359.00px;top:76.22px;font-size:12.5px;line-height:12.5px;color:#86B897;font-weight:bold;letter-spacing:1.000px;white-space:pre;">OFF</span>
<svg style="left:424px;top:69px;" width="30" height="28" viewBox="0 0 30 28"><rect x="0.8" y="0.8" width="28" height="25.5" rx="3" fill="#EAF4EC"/>
<rect x="2.8" y="3" width="4.7" height="20.8" fill="#66A07E"/>
<rect x="3.8" y="5.2" width="2.6" height="2.4" fill="#EAF4EC"/><rect x="3.8" y="9.3" width="2.6" height="2.4" fill="#EAF4EC"/><rect x="3.8" y="13.4" width="2.6" height="2.4" fill="#EAF4EC"/>
<path d="M15.4 5 H23 L28.2 10 V21 Q28.2 22 27.2 22 H15.4 Z" fill="#66A07E" transform="translate(-3.4,0)"/>
<path d="M22.6 5 L22.6 10 L27.4 10" fill="#EAF4EC" transform="translate(-3.4,0)"/></svg>
<svg style="left:480px;top:69px;" width="28" height="28" viewBox="0 0 28 28"><path d="M3 0.9 H22 Q25.2 0.9 25.2 4 V23.3 Q25.2 26.3 22.2 26.3 H6.5 L1 21 V3.5 Q1 0.9 3 0.9 Z" fill="#EAF4EC"/>
<path d="M4.5 3 H22 V11.5 Q22 13.3 20.2 13.3 H6.3 Q4.5 13.3 4.5 11.5 Z" fill="#66A07E"/>
<rect x="8" y="17.2" width="10" height="6.8" rx="1" fill="#66A07E"/>
<rect x="10.4" y="20.2" width="2.6" height="3.8" fill="#EAF4EC"/></svg>
<svg style="left:530px;top:70px;" width="60" height="26" viewBox="0 0 60 26"><path d="M3.5 7.2 L3.5 21 L17.6 21 Z" fill="#EAF4EC"/>
<path d="M11 15 L17.5 8.8 Q21.7 5 25.5 8.8 Q29 12.8 23.7 18.8" fill="none" stroke="#EAF4EC" stroke-width="3.6" stroke-linecap="round"/>
<path d="M44 10 H53 L48.5 16.6 Z" fill="#EAF4EC"/></svg>
<svg style="left:606px;top:70px;" width="28" height="28" viewBox="0 0 28 28"><path d="M8.5 6 Q3 8.8 3 14.5 A10 10 0 0 0 23 14.5 Q23 8.5 17.5 6" fill="none" stroke="#8DBF9F" stroke-width="3.4" stroke-linecap="round"/>
<path d="M14 2.2 H24.2 L14 11 Z" fill="#8DBF9F"/></svg>
<svg style="left:664px;top:72px;" width="20" height="20" viewBox="0 0 20 20"><rect x="2.7" y="3.2" width="14.2" height="1.9" fill="#EAF4EC"/><path d="M3.5 9 H16.4 L9.8 16 Z" fill="#EAF4EC"/></svg>
<svg style="left:715px;top:68px;" width="30" height="30" viewBox="0 0 30 30"><path d="M6 2.1 H20.5 L26 7.5 V26.8 H6 Z" fill="#EAF4EC"/>
<g stroke="#B9D4C2" stroke-width="0.9">
<line x1="13" y1="6" x2="24" y2="6"/><line x1="13" y1="10" x2="24" y2="10"/><line x1="13" y1="14" x2="24" y2="14"/><line x1="13" y1="18" x2="24" y2="18"/><line x1="13" y1="22" x2="24" y2="22"/>
<line x1="19" y1="5" x2="19" y2="25"/></g>
<rect x="2" y="9.2" width="10.3" height="13.4" fill="#A9CDB5"/>
<path d="M4.2 11.6 L10 20.2 M10 11.6 L4.2 20.2" stroke="#EAF4EC" stroke-width="1.6"/></svg>
<svg style="left:1570px;top:70px;" width="42" height="26" viewBox="0 0 42 26"><circle cx="13.9" cy="9.9" r="6.8" fill="none" stroke="#EAF4EC" stroke-width="1.9"/>
<line x1="18.8" y1="15" x2="25.3" y2="21.3" stroke="#EAF4EC" stroke-width="1.9" stroke-linecap="round"/>
<path d="M28.2 10.6 L32.3 14.6 L36.4 10.6" fill="none" stroke="#EAF4EC" stroke-width="1.8" stroke-linecap="round"/></svg>
<svg style="left:1905px;top:66px;" width="52" height="34" viewBox="0 0 52 34"><circle cx="18.2" cy="16.7" r="13.1" fill="none" stroke="#EAF4EC" stroke-width="2.2"/>
<rect x="13.6" y="10" width="2.5" height="5.8" rx="1.2" fill="#EAF4EC"/><rect x="20.4" y="10" width="2.5" height="5.8" rx="1.2" fill="#EAF4EC"/>
<path d="M11.2 20 Q18.3 27.5 25.7 20" fill="none" stroke="#EAF4EC" stroke-width="2"/>
<path d="M39 14.2 H48.1 L43.5 20.4 Z" fill="#EAF4EC"/></svg>
<svg style="left:1805px;top:112px;" width="34" height="28" viewBox="0 0 34 28"><path d="M4 8.5 V24 H25.7 V20.5" fill="none" stroke="#EAF4EC" stroke-width="2.6"/>
<path d="M9.5 18.8 Q11 9.5 21.5 8.8 V13.5 L29.5 7 L21.5 2.5 V5.6 Q10.5 6 9.5 18.8 Z" fill="#EAF4EC"/></svg>
<svg style="left:1922px;top:116px;" width="26" height="18" viewBox="0 0 26 18"><path d="M5.8 13.1 L13.7 5.7 L21.6 13.1" fill="none" stroke="#EAF4EC" stroke-width="3" stroke-linecap="round" stroke-linejoin="round"/></svg>
<div style="left:260.5px;top:156px;width:1px;height:107px;background:#DADADA;"></div>
<div style="left:685px;top:156px;width:1px;height:107px;background:#DADADA;"></div>
<div style="left:932.5px;top:156px;width:1px;height:107px;background:#DADADA;"></div>
<div style="left:1241px;top:156px;width:1px;height:107px;background:#DADADA;"></div>
<div style="left:1543.5px;top:156px;width:1px;height:107px;background:#DADADA;"></div>
<div style="left:1705px;top:156px;width:1px;height:107px;background:#DADADA;"></div>
<div style="left:277px;top:215.5px;width:171px;height:40px;background:linear-gradient(#FEFEFE,#EBEBEB);border:1px solid #C4C4C4;border-radius:5px;"></div>
<div style="left:327.5px;top:216.5px;width:1px;height:38px;background:#D0D0D0;"></div>
<div style="left:377.5px;top:216.5px;width:1px;height:38px;background:#D0D0D0;"></div>
<div style="left:427px;top:222.5px;width:1px;height:26px;background:#D8D8D8;"></div>
<div style="left:457.5px;top:215.5px;width:68px;height:40px;background:linear-gradient(#FEFEFE,#EBEBEB);border:1px solid #C4C4C4;border-radius:5px;"></div>
<div style="left:504px;top:222.5px;width:1px;height:26px;background:#D8D8D8;"></div>
<div style="left:534.5px;top:215.5px;width:135px;height:40px;background:linear-gradient(#FEFEFE,#EBEBEB);border:1px solid #C4C4C4;border-radius:5px;"></div>
<div style="left:599.5px;top:216.5px;width:1px;height:38px;background:#D0D0D0;"></div>
<div style="left:578px;top:222.5px;width:1px;height:26px;background:#D8D8D8;"></div>
<div style="left:648px;top:222.5px;width:1px;height:26px;background:#D8D8D8;"></div>
<div style="left:568px;top:162.5px;width:101.5px;height:40px;background:linear-gradient(#FEFEFE,#EBEBEB);border:1px solid #C4C4C4;border-radius:5px;"></div>
<div style="left:618px;top:163.5px;width:1px;height:38px;background:#D0D0D0;"></div>
<div style="left:701.5px;top:150px;width:141.5px;height:37px;background:linear-gradient(#FEFEFE,#EBEBEB);border:1px solid #C4C4C4;border-radius:5px;"></div>
<div style="left:795.5px;top:150px;width:47.5px;height:37px;background:linear-gradient(#D2D2D2,#DCDCDC);border:1px solid #AFAFAF;border-radius:0 5px 5px 0;"></div>
<div style="left:748px;top:151px;width:1px;height:35px;background:#D0D0D0;"></div>
<div style="left:795.5px;top:151px;width:1px;height:35px;background:#D0D0D0;"></div>
<div style="left:701.5px;top:190.5px;width:141.5px;height:36.5px;background:linear-gradient(#FEFEFE,#EBEBEB);border:1px solid #C4C4C4;border-radius:5px;"></div>
<div style="left:748px;top:191.5px;width:1px;height:34.5px;background:#D0D0D0;"></div>
<div style="left:795.5px;top:191.5px;width:1px;height:34.5px;background:#D0D0D0;"></div>
<div style="left:701.5px;top:230.5px;width:94px;height:37px;background:linear-gradient(#FEFEFE,#EBEBEB);border:1px solid #C4C4C4;border-radius:5px;"></div>
<div style="left:748px;top:231.5px;width:1px;height:35px;background:#D0D0D0;"></div>
<div style="left:805px;top:230.5px;width:59px;height:37px;background:linear-gradient(#FEFEFE,#EBEBEB);border:1px solid #C4C4C4;border-radius:5px;"></div>
<div style="left:948.5px;top:215.5px;width:166.5px;height:39.5px;background:linear-gradient(#FEFEFE,#EBEBEB);border:1px solid #C4C4C4;border-radius:5px;"></div>
<div style="left:1013.3px;top:216.5px;width:1px;height:37.5px;background:#D0D0D0;"></div>
<div style="left:1064.4px;top:216.5px;width:1px;height:37.5px;background:#D0D0D0;"></div>
<div style="left:992.5px;top:222.5px;width:1px;height:25.5px;background:#D8D8D8;"></div>
<div style="left:1124px;top:215.5px;width:101.5px;height:39.5px;background:linear-gradient(#FEFEFE,#EBEBEB);border:1px solid #C4C4C4;border-radius:5px;"></div>
<div style="left:1175px;top:216.5px;width:1px;height:37.5px;background:#D0D0D0;"></div>
<span style="left:577.50px;top:171.03px;font-size:23px;line-height:23px;color:#5E5E5E;font-weight:bold;letter-spacing:0.000px;white-space:pre;">A</span>
<span style="left:628.50px;top:173.99px;font-size:19.5px;line-height:19.5px;color:#5E5E5E;font-weight:bold;letter-spacing:0.000px;white-space:pre;">A</span>
<span style="left:293.20px;top:224.25px;font-size:22.5px;line-height:22.5px;color:#575757;font-weight:bold;letter-spacing:0.000px;white-space:pre;">B</span>
<span style="left:395.00px;top:224.79px;font-size:19.5px;line-height:19.5px;color:#575757;font-weight:normal;letter-spacing:0.000px;white-space:pre;">U</span>
<span style="left:615.50px;top:218.61px;font-size:23.5px;line-height:23.5px;color:#5E5E5E;font-weight:bold;letter-spacing:0.000px;white-space:pre;">A</span>
<span style="left:961.00px;top:224.34px;font-size:25px;line-height:25px;color:#575757;font-weight:normal;letter-spacing:0.000px;white-space:pre;">$</span>
<span style="left:1027.50px;top:224.68px;font-size:24px;line-height:24px;color:#575757;font-weight:normal;letter-spacing:0.000px;white-space:pre;">%</span>
<span style="left:1151.00px;top:219.53px;font-size:16.5px;line-height:16.5px;color:#555;font-weight:normal;letter-spacing:0.000px;white-space:pre;">.0</span>
<span style="left:1142.50px;top:233.03px;font-size:16.5px;line-height:16.5px;color:#555;font-weight:normal;letter-spacing:0.000px;white-space:pre;">.00</span>
<span style="left:1193.50px;top:219.53px;font-size:16.5px;line-height:16.5px;color:#555;font-weight:normal;letter-spacing:0.000px;white-space:pre;">.00</span>
<span style="left:1202.00px;top:233.03px;font-size:16.5px;line-height:16.5px;color:#555;font-weight:normal;letter-spacing:0.000px;white-space:pre;">.0</span>
<span style="left:1801.00px;top:164.24px;font-size:25px;line-height:25px;color:#6E9FDA;font-weight:bold;letter-spacing:0.000px;white-space:pre;">A</span>
<span style="left:1802.50px;top:187.14px;font-size:25px;line-height:25px;color:#8C8C8C;font-weight:bold;letter-spacing:0.000px;white-space:pre;">Z</span>
<svg style="left:0;top:0" width="2048" height="300" viewBox="0 0 2048 300"><defs><linearGradient id="org" x1="0" y1="0" x2="1" y2="0"><stop offset="0" stop-color="#F2CF9A"/><stop offset="1" stop-color="#E6BA7C"/></linearGradient></defs>
<rect x="100" y="165" width="38.5" height="44" rx="3.5" fill="url(#org)"/>
<path d="M107 170.5 Q107 165.3 112 165.3 L113.5 165.3 Q114 160 119 160 Q124 160 124.5 165.3 L126 165.3 Q131 165.3 131 170.5 Q131 173.8 128 173.8 H110 Q107 173.8 107 170.5 Z" fill="#8E8E8E"/><circle cx="119" cy="163.8" r="1.5" fill="#F4F4F4"/>
<path d="M113.6 179.2 H128.6 L140.4 190.6 V210.8 H113.6 Z" fill="#FFFFFF" stroke="#BDBDBD" stroke-width="1.1"/>
<path d="M128.6 179.2 V190.6 H140.4" fill="#F1F1F1" stroke="#BDBDBD" stroke-width="1.1"/><path d="M158.4 184 H166.7 L162.55 190.6 Z" fill="#808080"/><path d="M195 155 Q199.5 157 204.5 166 L208.5 173.5 L206.5 174.5 L201.5 168.5 Q196 161 195 155 Z" fill="#5A5A5A"/>
<path d="M212 155 Q207.5 157 202.5 166 L198.5 173.5 L200.5 174.5 L205.5 168.5 Q211 161 212 155 Z" fill="#5A5A5A"/>
<circle cx="196.4" cy="177.4" r="3.9" fill="#F4F4F4" stroke="#6B9AD2" stroke-width="1.9"/>
<circle cx="210.3" cy="177.4" r="3.9" fill="#F4F4F4" stroke="#6B9AD2" stroke-width="1.9"/><rect x="192.6" y="203.3" width="14.6" height="17.8" fill="#fff" stroke="#A3A3A3" stroke-width="1.1"/>
<path d="M200 196.3 H209.3 L214.5 201.6 V214.5 H200 Z" fill="#fff" stroke="#A3A3A3" stroke-width="1.1"/>
<path d="M209.3 196.3 V201.6 H214.5" fill="none" stroke="#A3A3A3" stroke-width="1.1"/><path d="M230.5 205 H238.4 L234.45 211.7 Z" fill="#808080"/><defs><linearGradient id="brs" x1="0" y1="0" x2="0" y2="1"><stop offset="0" stop-color="#D8CDBD"/><stop offset="0.35" stop-color="#B9CDE6"/><stop offset="1" stop-color="#6A9BDA"/></linearGradient></defs>
<g transform="translate(206 247.5) rotate(45)">
<rect x="-2.8" y="-15" width="5.6" height="9.5" rx="2.8" fill="#F3F3F3" stroke="#A6A6A6" stroke-width="1.1"/>
<rect x="-7" y="-6" width="14" height="8.5" rx="1" fill="#EFEFEF" stroke="#A6A6A6" stroke-width="1.1"/>
<path d="M-7 2.5 H7 L8.5 12.5 Q0 14 -8.5 12.5 Z" fill="url(#brs)" stroke="#7A8FAE" stroke-width="0.8"/>
</g><path d="M442 179 H450.6 L446.3 186 Z" fill="#808080"/><path d="M543 179 H551 L547.0 186 Z" fill="#808080"/><path d="M598.3 184.9 H611.6 L605 178.7 Z" fill="#6EA0DC"/><path d="M646.5 179.7 H659.8 L653.2 187 Z" fill="#6EA0DC"/><path d="M350.5 227 H360 M345.5 243.3 H355 M355.3 227 L350.2 243.3" stroke="#575757" stroke-width="2.6" fill="none"/><rect x="395" y="245.3" width="17.8" height="2.1" fill="#575757"/><path d="M434.2 232 H442.4 L438.29999999999995 238 Z" fill="#808080"/><g fill="none" stroke="#9A9A9A" stroke-width="1.5" stroke-dasharray="1.5 2.3">
<rect x="467.5" y="220" width="30" height="29"/><line x1="482.5" y1="220" x2="482.5" y2="249"/><line x1="467.5" y1="234.5" x2="497.5" y2="234.5"/></g>
<rect x="467.5" y="248.2" width="30" height="2" fill="#5E5E5E"/><path d="M511 232 H519.3 L515.15 238 Z" fill="#808080"/><path d="M553.5 219.5 A3 3 0 0 1 557.5 222.5 L557 227" fill="none" stroke="#7A7A7A" stroke-width="1.3"/>
<g transform="translate(552 231.5) rotate(40)"><rect x="-6.5" y="-7" width="13" height="14" rx="1" fill="#fff" stroke="#7E7E7E" stroke-width="1.3"/><rect x="-6" y="-3.2" width="12" height="2.6" fill="#6EA0DC"/></g>
<path d="M558.5 226.5 Q566.5 226 564.5 236" fill="none" stroke="#6EA0DC" stroke-width="2.4" stroke-linecap="round"/>
<rect x="538.8" y="242.7" width="31.8" height="7.8" rx="1.5" fill="#F8F36A"/><path d="M585 232 H593 L589.0 238 Z" fill="#808080"/><rect x="609" y="242.3" width="31.7" height="8.2" rx="1.5" fill="#E9505C"/><path d="M654.7 232 H663.9 L659.3 238 Z" fill="#808080"/><rect x="714.3" y="157.64999999999998" width="20.90000000000009" height="2.1" fill="#5A5A5A"/><rect x="714.3" y="162.95" width="20.90000000000009" height="2.1" fill="#5A5A5A"/><rect x="761.9" y="164.64999999999998" width="20.700000000000045" height="2.1" fill="#5A5A5A"/><rect x="761.9" y="169.95" width="20.700000000000045" height="2.1" fill="#5A5A5A"/><rect x="809.2" y="171.64999999999998" width="20.59999999999991" height="2.1" fill="#5A5A5A"/><rect x="809.2" y="176.95" width="20.59999999999991" height="2.1" fill="#5A5A5A"/><rect x="714.3" y="199.85" width="19.0" height="2.1" fill="#5A5A5A"/><rect x="714.3" y="205.14999999999998" width="12.0" height="2.1" fill="#5A5A5A"/><rect x="714.3" y="210.25" width="22.600000000000023" height="2.1" fill="#5A5A5A"/><rect x="714.3" y="215.64999999999998" width="15.600000000000023" height="2.1" fill="#5A5A5A"/><rect x="763.8" y="199.85" width="17.200000000000045" height="2.1" fill="#5A5A5A"/><rect x="767" y="205.14999999999998" width="10.799999999999955" height="2.1" fill="#5A5A5A"/><rect x="761.9" y="210.25" width="20.700000000000045" height="2.1" fill="#5A5A5A"/><rect x="765" y="215.64999999999998" width="14.299999999999955" height="2.1" fill="#5A5A5A"/><rect x="811.4" y="199.85" width="18.399999999999977" height="2.1" fill="#5A5A5A"/><rect x="818.4" y="205.14999999999998" width="11.399999999999977" height="2.1" fill="#5A5A5A"/><rect x="807.6" y="210.25" width="22.199999999999932" height="2.1" fill="#5A5A5A"/><rect x="814.6" y="215.64999999999998" width="15.199999999999932" height="2.1" fill="#5A5A5A"/><rect x="723" y="239.95" width="14" height="2.1" fill="#5A5A5A"/><rect x="729" y="245.54999999999998" width="8" height="2.1" fill="#5A5A5A"/><rect x="729" y="250.54999999999998" width="8" height="2.1" fill="#5A5A5A"/><rect x="723" y="255.95" width="14" height="2.1" fill="#5A5A5A"/><path d="M710.5 249 L717.5 242 V246 H724.4 V252 H717.5 V256 Z" fill="#6EA0DC"/><rect x="770.8" y="239.95" width="13.200000000000045" height="2.1" fill="#5A5A5A"/><rect x="776.8" y="245.54999999999998" width="7.2000000000000455" height="2.1" fill="#5A5A5A"/><rect x="776.8" y="250.54999999999998" width="7.2000000000000455" height="2.1" fill="#5A5A5A"/><rect x="770.8" y="255.95" width="13.200000000000045" height="2.1" fill="#5A5A5A"/><path d="M772 249 L765 242 V246 H758 V252 H765 V256 Z" fill="#6EA0DC"/><line x1="825" y1="263" x2="841.5" y2="246.5" stroke="#6EA0DC" stroke-width="1.5"/><path d="M843 245 L835.5 246.5 L841.5 252.5 Z" fill="#6EA0DC"/><path d="M850 246 H857.7 L853.85 251.6 Z" fill="#808080"/><rect x="861.5" y="160.5" width="13.5" height="17" fill="#fff" stroke="#A6A6A6" stroke-width="1"/>
<rect x="864" y="165.5" width="16" height="1.5" fill="#777"/><rect x="864" y="172" width="6" height="1.5" fill="#777"/>
<path d="M884 162.5 Q893.5 164 891.5 172 Q890 177 886 177.5" fill="none" stroke="#6EA0DC" stroke-width="3"/><path d="M879.5 177.5 L887.5 172 L888 183.5 Z" fill="#6EA0DC"/><rect x="862.5" y="196" width="25" height="24.5" fill="#fff" stroke="#BDBDBD" stroke-width="1"/>
<line x1="875" y1="196" x2="875" y2="202" stroke="#CFCFCF"/><line x1="875" y1="215" x2="875" y2="220.5" stroke="#CFCFCF"/>
<line x1="862.5" y1="202" x2="887.5" y2="202" stroke="#CFCFCF"/><line x1="862.5" y1="214.5" x2="887.5" y2="214.5" stroke="#CFCFCF"/>
<path d="M866 208.3 L870.5 204.5 V207.2 H879.5 V204.5 L884 208.3 L879.5 212 V209.4 H870.5 V212 Z" fill="#6EA0DC"/><path d="M902 205 H910.4 L906.2 211.6 Z" fill="#808080"/><path d="M1209.7 178.6 H1217.5 L1213.6 185.6 Z" fill="#808080"/><path d="M998.8 231.7 H1007.3 L1003.05 238.8 Z" fill="#808080"/><path d="M1086 227 Q1096 233 1092 241 Q1089 245 1085 246 Q1090 240 1088 235 Q1087 232 1085 231 Z" fill="#656565"/><path d="M1135.5 229.4 L1141.5 224 V227 H1149.5 V232 H1141.5 V235 Z" fill="#6EA0DC"/><path d="M1200.3 242 L1194.3 236.6 V239.6 H1186.3 V244.6 H1194.3 V247.6 Z" fill="#6EA0DC"/><rect x="1268.5" y="159.5" width="24" height="20" fill="#fff" stroke="#B8B8B8" stroke-width="1"/>
<g stroke="#DDDDDD" stroke-width="0.8"><line x1="1268.5" y1="164.5" x2="1292.5" y2="164.5"/><line x1="1268.5" y1="169.5" x2="1292.5" y2="169.5"/><line x1="1268.5" y1="174.5" x2="1292.5" y2="174.5"/><line x1="1276.5" y1="159.5" x2="1276.5" y2="179.5"/><line x1="1284.5" y1="159.5" x2="1284.5" y2="179.5"/></g>
<rect x="1272.5" y="160" width="6.5" height="5" fill="#EE9A9E"/><rect x="1272.5" y="165" width="10" height="5" fill="#8FB8EA"/><rect x="1272.5" y="170" width="15.5" height="4.8" fill="#EE9A9E"/><rect x="1272.5" y="174.8" width="6.5" height="4.5" fill="#8FB8EA"/><rect x="1268.5" y="196" width="22" height="20" fill="#fff" stroke="#B8B8B8" stroke-width="1"/>
<g stroke="#DCDCDC" stroke-width="0.8"><line x1="1268.5" y1="201" x2="1290.5" y2="201"/><line x1="1268.5" y1="206" x2="1290.5" y2="206"/><line x1="1268.5" y1="211" x2="1290.5" y2="211"/><line x1="1276" y1="196" x2="1276" y2="216"/><line x1="1283" y1="196" x2="1283" y2="216"/></g>
<rect x="1271" y="198" width="17" height="15" fill="#DCE8F6" opacity="0.8"/>
<path d="M1295.5 199 L1296.8 200.5 L1285 214 L1283 212.5 Z" fill="#E4E4E4" stroke="#9C9C9C" stroke-width="0.8"/>
<path d="M1283 212 Q1286.5 214 1284.5 217 Q1281 221.5 1272 222 Q1276 215 1283 212 Z" fill="#6FA2DD"/><rect x="1268.5" y="236" width="22" height="20" fill="#fff" stroke="#B8B8B8" stroke-width="1"/>
<g stroke="#DCDCDC" stroke-width="0.8"><line x1="1268.5" y1="241" x2="1290.5" y2="241"/><line x1="1268.5" y1="246" x2="1290.5" y2="246"/><line x1="1268.5" y1="251" x2="1290.5" y2="251"/><line x1="1276" y1="236" x2="1276" y2="256"/><line x1="1283" y1="236" x2="1283" y2="256"/></g>
<rect x="1271" y="238" width="17" height="15" fill="#DCE8F6" opacity="0.8"/>
<path d="M1295.5 239 L1296.8 240.5 L1285 254 L1283 252.5 Z" fill="#E4E4E4" stroke="#9C9C9C" stroke-width="0.8"/>
<path d="M1283 252 Q1286.5 254 1284.5 257 Q1281 261.5 1272 262 Q1276 255 1283 252 Z" fill="#6FA2DD"/><path d="M1512.7 165 H1521 L1516.85 171.5 Z" fill="#808080"/><path d="M1451.7 205 H1460 L1455.85 211.5 Z" fill="#808080"/><path d="M1404 246 H1412.6 L1408.3 252.5 Z" fill="#808080"/><rect x="1577" y="156" width="17" height="25.5" fill="#fff" stroke="#B8B8B8" stroke-width="1" rx="1"/><line x1="1577" y1="162.375" x2="1594" y2="162.375" stroke="#D6D6D6" stroke-width="0.9"/><line x1="1577" y1="168.75" x2="1594" y2="168.75" stroke="#D6D6D6" stroke-width="0.9"/><line x1="1577" y1="175.125" x2="1594" y2="175.125" stroke="#D6D6D6" stroke-width="0.9"/><line x1="1585.5" y1="156" x2="1585.5" y2="181.5" stroke="#D6D6D6" stroke-width="0.9"/><rect x="1574" y="162.5" width="25" height="7" rx="1" fill="#7BC47B"/><path d="M1567 166 L1573.5 160.5 V171.5 Z" fill="#7BC47B"/><rect x="1571" y="164.5" width="5" height="3" fill="#7BC47B"/><rect x="1572" y="196.5" width="17" height="25" fill="#fff" stroke="#B8B8B8" stroke-width="1" rx="1"/><line x1="1572" y1="202.75" x2="1589" y2="202.75" stroke="#D6D6D6" stroke-width="0.9"/><line x1="1572" y1="209.0" x2="1589" y2="209.0" stroke="#D6D6D6" stroke-width="0.9"/><line x1="1572" y1="215.25" x2="1589" y2="215.25" stroke="#D6D6D6" stroke-width="0.9"/><line x1="1580.5" y1="196.5" x2="1580.5" y2="221.5" stroke="#D6D6D6" stroke-width="0.9"/><rect x="1567" y="203" width="23" height="7.5" rx="1" fill="#E8777C"/><path d="M1591.5 202.5 L1598 209 M1598 202.5 L1591.5 209" stroke="#E8777C" stroke-width="2.2"/><rect x="1568.5" y="241" width="29.5" height="20.5" fill="#fff" stroke="#B8B8B8" stroke-width="1" rx="1"/><line x1="1568.5" y1="247.83333333333334" x2="1598.0" y2="247.83333333333334" stroke="#D6D6D6" stroke-width="0.9"/><line x1="1568.5" y1="254.66666666666666" x2="1598.0" y2="254.66666666666666" stroke="#D6D6D6" stroke-width="0.9"/><line x1="1575.875" y1="241" x2="1575.875" y2="261.5" stroke="#D6D6D6" stroke-width="0.9"/><line x1="1583.25" y1="241" x2="1583.25" y2="261.5" stroke="#D6D6D6" stroke-width="0.9"/><line x1="1590.625" y1="241" x2="1590.625" y2="261.5" stroke="#D6D6D6" stroke-width="0.9"/><rect x="1575.5" y="244.5" width="9" height="9.5" fill="#6FA2DD"/><path d="M1570.5 236 H1587 M1570.5 233.5 V238.5 M1587 233.5 V238.5" stroke="#6FA2DD" stroke-width="1.4" fill="none"/><path d="M1571.5 236 L1574.5 234 V238 Z M1586 236 L1583 234 V238 Z" fill="#6FA2DD"/><path d="M1669 165 H1677 L1673.0 171.4 Z" fill="#808080"/><path d="M1674.5 205 H1682.4 L1678.45 211.4 Z" fill="#808080"/><path d="M1674.5 245.6 H1682.4 L1678.45 252 Z" fill="#808080"/><path d="M1734 155.5 H1756.5 V162 H1754 L1753.3 159.3 H1740.5 L1748.5 168.8 L1740 178.5 H1754 L1755 175.5 H1757.5 V182.5 H1733.5 V180 L1743.8 168.8 L1734 157.8 Z" fill="#8E8E8E"/><path d="M1771 164 H1779 L1775.0 171 Z" fill="#808080"/><rect x="1733.5" y="196.5" width="22.5" height="24.5" rx="1" fill="#fff" stroke="#B3B3B3"/><rect x="1734" y="197" width="21.5" height="4.5" fill="#D8D8D8"/><path d="M1742 205 H1748 V210.5 H1751.5 L1745 217.5 L1738.5 210.5 H1742 Z" fill="#6EA0DC"/><path d="M1766 205.6 H1774 L1770.0 211.8 Z" fill="#808080"/><g transform="translate(1744.5 249) rotate(-45)"><rect x="-11" y="-6.3" width="22" height="12.6" rx="2.5" fill="#F0AFC0" stroke="#C77A8E" stroke-width="1"/><rect x="-11" y="-6.3" width="22" height="4" rx="2" fill="#F7CBD6"/></g><path d="M1766 246 H1774 L1770.0 252 Z" fill="#808080"/><path d="M1824.5 177 Q1824.5 172.5 1839.5 172.5 Q1854.5 172.5 1854.5 177 L1843 190 V203 Q1843 205 1839.5 205 Q1836 205 1836 203 V190 Z" fill="#9A9A9A"/><ellipse cx="1839.5" cy="177" rx="13" ry="3.2" fill="#D7D7D7"/><path d="M1860.8 184.5 H1868.7 L1864.75 190.7 Z" fill="#808080"/></svg>
<span style="left:812px;top:235px;font-size:20px;line-height:20px;color:#666;transform:rotate(-45deg);transform-origin:50% 50%;">ab</span>
<svg style="left:0;top:0" width="2048" height="1325" viewBox="0 0 2048 1325"><path d="M202.2 289.6 H213.6 L207.9 280 Z" fill="#8A8A8A"/><path d="M202.2 300 H213.6 L207.9 309.8 Z" fill="#8A8A8A"/><path d="M249.5 287 L267.5 305 M267.5 287 L249.5 305" stroke="#C6C6C6" stroke-width="2.6"/><path d="M299 296.5 L306 304 L322 287.5" fill="none" stroke="#C6C6C6" stroke-width="2.8"/><rect x="390" y="283" width="1" height="25" fill="#DADADA"/><path d="M1955.5 290.5 H1967 L1961.2 300.5 Z" fill="#555"/><defs><linearGradient id="pv" x1="0" y1="0" x2="0" y2="1"><stop offset="0" stop-color="#F4F6FA"/><stop offset="1" stop-color="#CDD6E6"/></linearGradient></defs><rect x="137.5" y="427.0" width="11.5" height="11.5" rx="2" fill="url(#pv)" stroke="#9EABC2" stroke-width="1"/><rect x="140" y="431.9" width="6.5" height="1.8" fill="#27324A"/><rect x="158.7" y="464.1" width="11.5" height="11.5" rx="2" fill="url(#pv)" stroke="#9EABC2" stroke-width="1"/><rect x="161.2" y="469.0" width="6.5" height="1.8" fill="#27324A"/><rect x="179.8" y="500.8" width="11.5" height="11.5" rx="2" fill="url(#pv)" stroke="#9EABC2" stroke-width="1"/><rect x="182.3" y="505.7" width="6.5" height="1.8" fill="#27324A"/><rect x="179.8" y="869.55" width="11.5" height="11.5" rx="2" fill="url(#pv)" stroke="#9EABC2" stroke-width="1"/><rect x="182.3" y="874.4499999999999" width="6.5" height="1.8" fill="#27324A"/><rect x="853.5" y="381.5" width="28.5" height="29" rx="2" fill="#FBFBFB" stroke="#6F6F6F" stroke-width="1.2"/><path d="M860.6 392 H875.4 L868 401 Z" fill="#7A7A7A"/><path d="M112.6 1165.5 V1183.8 L100 1174.6 Z" fill="#8C8C8C"/><path d="M140.3 1165.5 V1183.8 L153 1174.6 Z" fill="#8C8C8C"/><rect x="180" y="1153" width="1" height="35" fill="#D0D0D0"/><rect x="686" y="1153" width="1" height="35" fill="#D0D0D0"/><path d="M645.7 1173 H663 M654.35 1164.6 V1181.4" stroke="#5E5E5E" stroke-width="3"/><rect x="1309.5" y="1198" width="64" height="39" fill="#A9A9A9"/><g fill="#FFFFFF"><rect x="1330.5" y="1205.5" width="6.2" height="6.2"/><rect x="1338.3" y="1205.5" width="6.2" height="6.2"/><rect x="1346.1" y="1205.5" width="6.2" height="6.2"/><rect x="1330.5" y="1213.3" width="6.2" height="6.2"/><rect x="1338.3" y="1213.3" width="6.2" height="6.2"/><rect x="1346.1" y="1213.3" width="6.2" height="6.2"/><rect x="1330.5" y="1221.1" width="6.2" height="6.2"/><rect x="1338.3" y="1221.1" width="6.2" height="6.2"/><rect x="1346.1" y="1221.1" width="6.2" height="6.2"/></g><rect x="1393.5" y="1206" width="23" height="22" fill="none" stroke="#666" stroke-width="1.6"/><rect x="1398" y="1210.5" width="14" height="13" fill="none" stroke="#666" stroke-width="1.3"/><path d="M1400.5 1214 H1409.5 M1400.5 1217 H1409.5 M1400.5 1220 H1409.5" stroke="#666" stroke-width="1.2"/><rect x="1455.5" y="1206" width="23" height="22" fill="none" stroke="#666" stroke-width="1.6"/><path d="M1455.5 1217 H1468 V1206 M1461.5 1206 V1217" fill="none" stroke="#666" stroke-width="1.4"/><rect x="1539" y="1215.5" width="14" height="3.6" fill="#6E6E6E"/><rect x="1593.5" y="1214" width="171.5" height="7.4" rx="3.7" fill="#A3A3A3"/><circle cx="1689" cy="1217.5" r="10.2" fill="#FFFFFF" stroke="#BDBDBD" stroke-width="0.8"/><path d="M1805.4 1217.4 H1819.7 M1812.5 1209.8 V1225" stroke="#6E6E6E" stroke-width="3.4"/></svg>
<span style="left:350.00px;top:280.72px;font-size:27.5px;line-height:27.5px;color:#333;font-weight:bold;letter-spacing:2.500px;white-space:pre;font-family:'Liberation Serif',serif;font-style:italic;">fx</span>
<div style="left:131.5px;top:1128.3px;width:604px;height:17.5px;background:rgba(0,0,0,0.38);border-radius:9px;"></div>
<div style="left:73px;top:59px;width:1902px;height:1178px;border-radius:6px;border:1px solid rgba(0,0,0,0.22);"></div>
</div></body></html>
